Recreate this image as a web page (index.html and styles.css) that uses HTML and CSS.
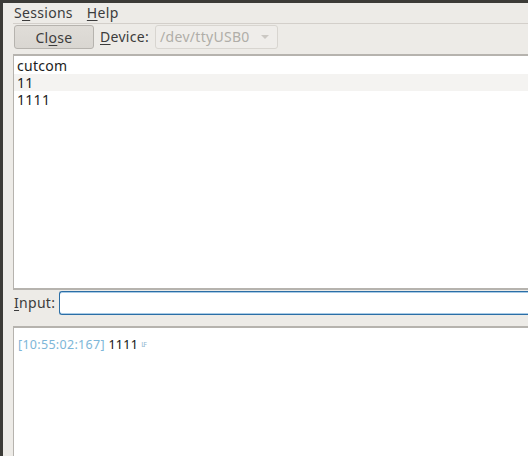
FILE: index.html
```html
<!DOCTYPE html>
<html lang="en">
<head>
  <meta charset="UTF-8">
  <title>CuteCom</title>
  <link rel="stylesheet" href="styles.css">
</head>
<body>

  <div class="window">

    <!-- menu -->
    <div class="menubar">
      <span class="menu-item">S<u>e</u>ssions</span>
      <span class="menu-item"><u>H</u>elp</span>
    </div>

    <!-- connection bar -->
    <div class="toolbar">
      <button class="push-button">Cl<u>o</u>se</button>
      <span class="label"><u>D</u>evice:</span>
      <div class="combo">
        <span>/dev/ttyUSB0</span>
        <span class="combo-arrow"></span>
      </div>
    </div>

    <div class="output">
      <div class="line">cutcom</div>
      <div class="line current">11</div>
      <div class="line">1111</div>
    </div>

    <div class="input-row">
      <span class="label"><u>I</u>nput:</span>
      <div class="input-field"></div>
    </div>

    <div class="log">
      <div class="log-line">
        <span class="stamp">[10:55:02:167]</span> 1111<span class="lf">LF</span>
      </div>
    </div>

  </div>

</body>
</html>
```

FILE: styles.css
```css
html, body {
  margin: 0;
  height: 100%;
}

body {
  background-color: #3c3b37;
  padding: 3px 0 0 3px;
  box-sizing: border-box;
  overflow: hidden;
  font-family: "Noto Sans", "DejaVu Sans", sans-serif;
  font-size: 14px;
  letter-spacing: 0.3px;
  color: #3c3c3c;
}

.window {
  background-color: #edebe7;
  height: 453px;
  padding-left: 10px;
  display: flex;
  flex-direction: column;
}

u {
  text-decoration-thickness: 1px;
  text-underline-offset: 2px;
}

.menubar {
  height: 20px;
  display: flex;
  gap: 14px;
  padding-left: 1px;
  line-height: 20px;
  border-bottom: 1px solid #d3cfca;
}

.toolbar {
  height: 30px;
  display: flex;
  align-items: flex-start;
  padding: 1px 0 0 1px;
  box-sizing: border-box;
}

.push-button {
  width: 80px;
  height: 24px;
  font-family: inherit;
  font-size: 14px;
  letter-spacing: 0.3px;
  color: #3c3c3c;
  background: linear-gradient(#e0ddd8, #d9d6d1);
  border: 1px solid #b6b3ae;
  border-radius: 3px;
  padding: 0;
}

.toolbar .label {
  margin-left: 6px;
  line-height: 24px;
}

.combo {
  margin-left: 6px;
  width: 123px;
  height: 24px;
  box-sizing: border-box;
  border: 1px solid #d8d5d0;
  border-radius: 3px;
  background: #efedea;
  color: #b0ada8;
  padding-left: 4px;
  line-height: 22px;
  display: flex;
  justify-content: space-between;
  align-items: center;
}

.combo-arrow {
  width: 0;
  height: 0;
  margin-right: 8px;
  border-left: 4px solid transparent;
  border-right: 4px solid transparent;
  border-top: 4px solid #cbc8c3;
}

.output {
  height: 231px;
  background: #ffffff;
  border-top: 2px solid #b6b3ae;
  border-bottom: 2px solid #b6b3ae;
  border-left: 1px solid #b6b3ae;
  padding-top: 1px;
  color: #1c1c1c;
}

.line {
  height: 17px;
  line-height: 17px;
  padding-left: 3px;
}

.line.current {
  background: #f4f3f1;
}

.input-row {
  height: 36px;
  display: flex;
  align-items: flex-start;
  padding: 1px 0 0 1px;
  box-sizing: border-box;
}

.input-row .label {
  line-height: 24px;
  width: 45px;
}

.input-field {
  flex: 1;
  height: 24px;
  box-sizing: border-box;
  background: #ffffff;
  border: 1px solid #2b6ea6;
  border-right: none;
  border-radius: 3px 0 0 3px;
  box-shadow: inset 0 1px 0 #a9cbe6, inset 0 -1px 0 #a9cbe6;
}

.log {
  flex: 1;
  background: #ffffff;
  border-top: 2px solid #b6b3ae;
  border-left: 1px solid #b6b3ae;
  padding: 9px 0 0 4px;
}

.log-line {
  font-size: 12.5px;
  letter-spacing: 0.3px;
  color: #111111;
  line-height: 16px;
}

.stamp {
  color: #7db6d8;
}

.lf {
  font-size: 7px;
  color: #8fb8d0;
  margin-left: 3px;
  letter-spacing: -1.5px;
  vertical-align: 2px;
}
```
